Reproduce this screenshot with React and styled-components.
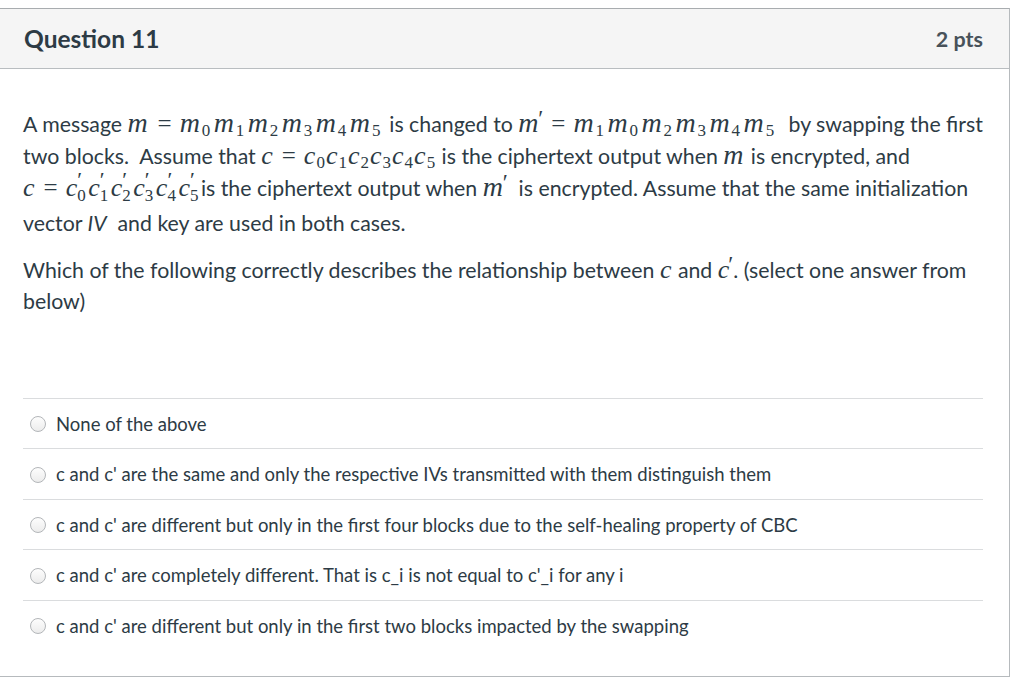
import React from "react";
import styled, { createGlobalStyle } from "styled-components";

const Global = createGlobalStyle`
  html, body { margin: 0; padding: 0; background: #fff; }
  body { font-family: Lato, "Open Sans", sans-serif; color: #2d3b45; }
`;

const Page = styled.div`
  padding-top: 8px;
  width: 1024px;
  height: 687px;
  box-sizing: border-box;
  overflow: hidden;
`;

const Card = styled.div`
  margin-left: -1px;
  width: 1011px;
  box-sizing: border-box;
  border: 1px solid #b6babd;
  border-top-color: #a8acaf;
`;

const Header = styled.div`
  display: flex;
  justify-content: space-between;
  align-items: center;
  height: 59px;
  padding: 0 26px 0 24px;
  background: #f5f5f5;
  border-bottom: 1px solid #b9bdc0;
`;

const Title = styled.div`
  font-size: 24.5px;
  font-weight: 700;
  color: #2d3b45;
`;

const Points = styled.div`
  font-size: 21.5px;
  font-weight: 700;
  color: #48525a;
`;

const Body = styled.div`
  padding: 39px 26px 26px 23px;
`;

const Para = styled.p`
  margin: 0 0 ${(p) => p.$gap || 0}px;
  font-size: 21.3px;
  line-height: ${(p) => p.$lh || 32}px;
  color: #2d3b45;
  white-space: nowrap;
`;

const Line = styled.span`
  display: block;
  height: ${(p) => p.$h || 32}px;
`;

const Mi = styled.span`
  font-family: "Liberation Serif", "Times New Roman", serif;
  font-style: italic;
  font-size: ${(p) => (p.$wide ? 28 : 26)}px;
  line-height: 0;
  letter-spacing: ${(p) => (p.$wide ? 1.8 : 1)}px;
`;

const Rm = styled.span`
  font-family: "Liberation Serif", "Times New Roman", serif;
  font-size: 25px;
  line-height: 0;
  padding: 0 ${(p) => p.$pad || 0}px;
`;

const Sub = styled.span`
  font-family: "Liberation Serif", "Times New Roman", serif;
  font-style: normal;
  font-size: 17px;
  line-height: 0;
  vertical-align: -4px;
  margin-right: ${(p) => p.$mr || 1}px;
`;

const Prime = styled.span`
  font-family: "Liberation Serif", "Times New Roman", serif;
  font-style: normal;
  font-size: 23px;
  line-height: 0;
  vertical-align: 6px;
  margin-left: -2px;
`;

const Stack = styled.span`
  display: inline-flex;
  flex-direction: column;
  vertical-align: 9px;
  font-family: "Liberation Serif", "Times New Roman", serif;
  line-height: 16px;
  margin-left: -1px;
  margin-right: 2.5px;
`;

const StackPrime = styled.span`
  font-size: 22px;
`;

const StackSub = styled.span`
  font-size: 17px;
`;

const Options = styled.div`
  margin-top: 81px;
`;

const Option = styled.label`
  display: flex;
  align-items: center;
  height: 49px;
  border-top: 1px solid #dadcde;
  font-size: 18.5px;
  color: #2d3b45;
  &:nth-child(even) {
    height: 50px;
  }
`;

const Radio = styled.span`
  width: 14px;
  height: 14px;
  border-radius: 50%;
  border: 1px solid #b3b6b9;
  background: linear-gradient(#fdfdfd, #ececec);
  margin: 1px 10px 0 7px;
  flex: none;
`;

const Sym = ({ v, s }) => (
  <>
    <Mi $wide={v === "m"}>{v}</Mi>
    {s !== undefined && <Sub $mr={v === "m" ? 3.5 : 1}>{s}</Sub>}
  </>
);

const Seq = ({ v, list }) => (
  <>
    {list.map((s) => (
      <Sym key={s} v={v} s={s} />
    ))}
  </>
);

const CPrime = ({ s }) => (
  <>
    <Mi>c</Mi>
    <Stack>
      <StackPrime>′</StackPrime>
      <StackSub>{s}</StackSub>
    </Stack>
  </>
);

const Eq = () => <Rm $pad={8}>=</Rm>;

const answers = [
  "None of the above",
  "c and c' are the same and only the respective IVs transmitted with them distinguish them",
  "c and c' are different but only in the first four blocks due to the self-healing property of CBC",
  "c and c' are completely different. That is c_i is not equal to c'_i for any i",
  "c and c' are different but only in the first two blocks impacted by the swapping",
];

export default function App() {
  return (
    <Page>
      <Global />
      <Card>
        <Header>
          <Title>Question 11</Title>
          <Points>2 pts</Points>
        </Header>
        <Body>
          <Para $gap={16}>
            <Line>
              A message <Mi $wide>m</Mi>
              <Eq />
              <Seq v="m" list={[0, 1, 2, 3, 4, 5]} /> is changed to <Mi $wide>m</Mi>
              <Prime>′</Prime>
              <Eq />
              <Seq v="m" list={[1, 0, 2, 3, 4, 5]} />
              &nbsp; by swapping the first
            </Line>
            <Line>
              two blocks.&nbsp; Assume that <Mi>c</Mi>
              <Eq />
              <Seq v="c" list={[0, 1, 2, 3, 4, 5]} /> is the ciphertext output when{" "}
              <Mi $wide>m</Mi> is encrypted, and
            </Line>
            <Line $h={35}>
              <Mi>c</Mi>
              <Eq />
              {[0, 1, 2, 3, 4, 5].map((s) => (
                <CPrime key={s} s={s} />
              ))}
              is the ciphertext output when <Mi $wide>m</Mi>
              <Prime>′</Prime>&nbsp;&nbsp;is encrypted. Assume that the same initialization
            </Line>
            <Line>
              vector <i>IV</i>&nbsp; and key are used in both cases.
            </Line>
          </Para>
          <Para $lh={31}>
            Which of the following correctly describes the relationship between{" "}
            <Mi>c</Mi> and <Mi>c</Mi>
            <Prime>′</Prime>. (select one answer from
            <br />
            below)
          </Para>
          <Options>
            {answers.map((a) => (
              <Option key={a}>
                <Radio />
                {a}
              </Option>
            ))}
          </Options>
        </Body>
      </Card>
    </Page>
  );
}
